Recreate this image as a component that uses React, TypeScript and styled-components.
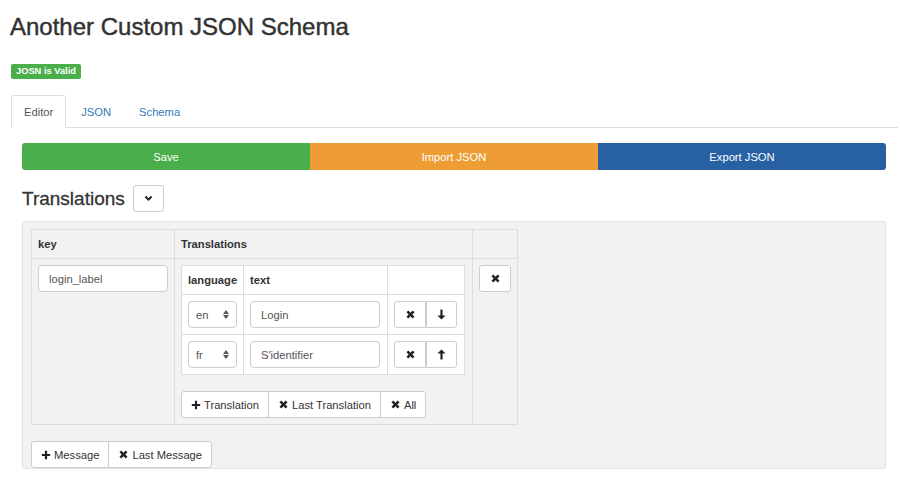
import React from 'react';
import styled, { createGlobalStyle } from 'styled-components';

const GlobalStyle = createGlobalStyle`
  html, body {
    margin: 0;
    padding: 0;
    background: #ffffff;
  }
  body {
    font-family: "Liberation Sans", Helvetica, Arial, sans-serif;
    font-size: 11.2px;
    line-height: 16px;
    color: #333333;
  }
  * {
    box-sizing: border-box;
  }
`;

const Page = styled.div`
  width: 900px;
  padding: 14px 2px 0 11px;
`;

const Title = styled.h1`
  margin: 0 0 0 -1px;
  font-size: 24px;
  line-height: 26px;
  font-weight: 500;
  -webkit-text-stroke: 0.45px #333333;
  color: #333333;
`;

const Badge = styled.span`
  display: inline-block;
  margin-top: 24px;
  padding: 3px 5px;
  font-size: 9.3px;
  line-height: 9px;
  font-weight: 700;
  color: #ffffff;
  background: #4aae4a;
  border-radius: 2px;
`;

const Tabs = styled.ul`
  display: flex;
  list-style: none;
  margin: 16px 0 0;
  padding: 0;
  border-bottom: 1px solid #dddddd;
`;

const Tab = styled.li<{ $active?: boolean }>`
  margin: 0 2px -1px 0;
  padding: 8px 12px 7px;
  border: 1px solid ${(p) => (p.$active ? '#dddddd' : 'transparent')};
  border-bottom-color: ${(p) => (p.$active ? '#ffffff' : 'transparent')};
  border-radius: 3px 3px 0 0;
  background: ${(p) => (p.$active ? '#ffffff' : 'transparent')};
  color: ${(p) => (p.$active ? '#555555' : '#337ab7')};
  cursor: pointer;
`;

const TabPane = styled.div`
  padding: 15px 12px 0 11px;
`;

const ActionBar = styled.div`
  display: grid;
  grid-template-columns: 1fr 1fr 1fr;
  border-radius: 3px;
  overflow: hidden;
`;

const BarButton = styled.button<{ $color: string }>`
  height: 27px;
  border: none;
  background: ${(p) => p.$color};
  color: #ffffff;
  font: inherit;
  cursor: pointer;
`;

const SectionHead = styled.div`
  display: flex;
  align-items: center;
  gap: 8px;
  margin-top: 15px;
`;

const SectionTitle = styled.h3`
  margin: 0;
  font-size: 19px;
  line-height: 22px;
  font-weight: 500;
  -webkit-text-stroke: 0.3px #333333;
`;

const Well = styled.div`
  margin-top: 9px;
  padding: 7px 8px 0;
  background: #f2f2f2;
  border: 1px solid #e3e3e3;
  border-radius: 2px;
`;

const Table = styled.table<{ $white?: boolean; $width: number }>`
  width: ${(p) => p.$width}px;
  table-layout: fixed;
  border-collapse: collapse;
  background: ${(p) => (p.$white ? '#ffffff' : 'transparent')};

  th,
  td {
    border: 1px solid #dddddd;
    padding: 6px;
    text-align: left;
    vertical-align: top;
  }
  th {
    font-weight: 700;
  }
`;

const Field = styled.div<{ $width: number }>`
  width: ${(p) => p.$width}px;
  height: 27px;
  padding: 0 10px;
  display: flex;
  align-items: center;
  justify-content: space-between;
  background: #ffffff;
  border: 1px solid #cccccc;
  border-radius: 4px;
  color: #555555;
`;

const SelectArrows = styled.span`
  display: flex;
  flex-direction: column;
  gap: 1px;
  margin-right: -3px;
`;

const Group = styled.div<{ $top?: number }>`
  display: inline-flex;
  margin-top: ${(p) => p.$top ?? 0}px;
`;

const Btn = styled.button<{ $w?: number }>`
  display: inline-flex;
  align-items: center;
  justify-content: center;
  gap: 3px;
  height: 27px;
  min-width: ${(p) => (p.$w ? `${p.$w}px` : 'auto')};
  padding: 0 9px;
  background: #ffffff;
  border: 1px solid #cccccc;
  border-radius: 3px;
  color: #333333;
  font: inherit;
  cursor: pointer;

  ${Group} > & {
    border-radius: 0;
  }
  ${Group} > & + & {
    margin-left: -1px;
  }
  ${Group} > &:first-child {
    border-radius: 3px 0 0 3px;
  }
  ${Group} > &:last-child {
    border-radius: 0 3px 3px 0;
  }
`;

const Toggle = styled(Btn)`
  width: 31px;
  padding: 0;
`;

const RemoveIcon = () => (
  <svg width="11" height="11" viewBox="0 0 12 12">
    <path d="M1.6 3.6 3.6 1.6 6 4 8.4 1.6 10.4 3.6 8 6 10.4 8.4 8.4 10.4 6 8 3.6 10.4 1.6 8.4 4 6Z" fill="#222" />
  </svg>
);

const PlusIcon = () => (
  <svg width="10" height="10" viewBox="0 0 12 12">
    <path d="M4.7 1h2.6v3.7H11v2.6H7.3V11H4.7V7.3H1V4.7h3.7Z" fill="#222" />
  </svg>
);

const ArrowIcon = ({ up }: { up?: boolean }) => (
  <svg width="9" height="11" viewBox="0 0 10 12" style={up ? { transform: 'rotate(180deg)' } : undefined}>
    <path d="M3.8 0.5h2.4v6.5h3.3L5 11.5 0.5 7h3.3Z" fill="#222" />
  </svg>
);

const ChevronIcon = () => (
  <svg width="9" height="7" viewBox="0 0 10 8">
    <path d="M1.5 1.8 5 5.3 8.5 1.8" fill="none" stroke="#222" strokeWidth="2.4" />
  </svg>
);

const UpDown = () => (
  <SelectArrows>
    <svg width="6" height="4" viewBox="0 0 6 4">
      <path d="M3 0 6 4H0Z" fill="#555" />
    </svg>
    <svg width="6" height="4" viewBox="0 0 6 4">
      <path d="M0 0h6L3 4Z" fill="#555" />
    </svg>
  </SelectArrows>
);

const rows = [
  { lang: 'en', text: 'Login', up: false },
  { lang: 'fr', text: "S'identifier", up: true },
];

export default function App() {
  return (
    <Page>
      <GlobalStyle />
      <Title>Another Custom JSON Schema</Title>
      <Badge>JOSN is Valid</Badge>
      <Tabs>
        <Tab $active>Editor</Tab>
        <Tab>JSON</Tab>
        <Tab>Schema</Tab>
      </Tabs>
      <TabPane>
        <ActionBar>
          <BarButton $color="#4aae4a">Save</BarButton>
          <BarButton $color="#ed9d33">Import JSON</BarButton>
          <BarButton $color="#2761a3">Export JSON</BarButton>
        </ActionBar>

        <SectionHead>
          <SectionTitle>Translations</SectionTitle>
          <Toggle>
            <ChevronIcon />
          </Toggle>
        </SectionHead>

        <Well>
          <Table $width={486}>
            <colgroup>
              <col style={{ width: 143 }} />
              <col style={{ width: 298 }} />
              <col style={{ width: 45 }} />
            </colgroup>
            <thead>
              <tr>
                <th>key</th>
                <th>Translations</th>
                <th />
              </tr>
            </thead>
            <tbody>
              <tr>
                <td>
                  <Field $width={130}>login_label</Field>
                </td>
                <td>
                  <Table $white $width={283}>
                    <colgroup>
                      <col style={{ width: 62 }} />
                      <col style={{ width: 144 }} />
                      <col style={{ width: 77 }} />
                    </colgroup>
                    <thead>
                      <tr>
                        <th>language</th>
                        <th>text</th>
                        <th />
                      </tr>
                    </thead>
                    <tbody>
                      {rows.map((r) => (
                        <tr key={r.lang}>
                          <td>
                            <Field $width={49} style={{ paddingLeft: 7 }}>
                              {r.lang}
                              <UpDown />
                            </Field>
                          </td>
                          <td>
                            <Field $width={130}>{r.text}</Field>
                          </td>
                          <td>
                            <Group>
                              <Btn $w={32}>
                                <RemoveIcon />
                              </Btn>
                              <Btn $w={31}>
                                <ArrowIcon up={r.up} />
                              </Btn>
                            </Group>
                          </td>
                        </tr>
                      ))}
                    </tbody>
                  </Table>
                  <Group $top={16}>
                    <Btn>
                      <PlusIcon />
                      Translation
                    </Btn>
                    <Btn>
                      <RemoveIcon />
                      Last Translation
                    </Btn>
                    <Btn>
                      <RemoveIcon />
                      All
                    </Btn>
                  </Group>
                </td>
                <td>
                  <Btn $w={32}>
                    <RemoveIcon />
                  </Btn>
                </td>
              </tr>
            </tbody>
          </Table>
          <Group $top={16}>
            <Btn>
              <PlusIcon />
              Message
            </Btn>
            <Btn>
              <RemoveIcon />
              Last Message
            </Btn>
          </Group>
        </Well>
      </TabPane>
    </Page>
  );
}
